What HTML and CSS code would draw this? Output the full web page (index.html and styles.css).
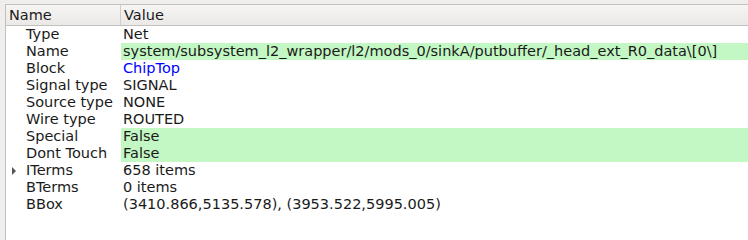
FILE: index.html
```html
<!DOCTYPE html>
<html>
<head>
<meta charset="utf-8">
<title>Properties</title>
<link rel="stylesheet" href="styles.css">
</head>
<body>
<div class="frame">
  <div class="head">
    <div class="hcell hname">Name</div>
    <div class="hcell">Value</div>
  </div>
  <div class="rows">
    <div class="row"><div class="key">Type</div><div class="val">Net</div></div>
    <div class="row"><div class="key">Name</div><div class="val hl">system/subsystem_l2_wrapper/l2/mods_0/sinkA/putbuffer/_head_ext_R0_data\[0\]</div></div>
    <div class="row"><div class="key">Block</div><div class="val link">ChipTop</div></div>
    <div class="row"><div class="key">Signal type</div><div class="val">SIGNAL</div></div>
    <div class="row"><div class="key">Source type</div><div class="val">NONE</div></div>
    <div class="row"><div class="key">Wire type</div><div class="val">ROUTED</div></div>
    <div class="row"><div class="key">Special</div><div class="val hl">False</div></div>
    <div class="row"><div class="key">Dont Touch</div><div class="val hl">False</div></div>
    <div class="row"><div class="key"><span class="arrow"></span>ITerms</div><div class="val">658 items</div></div>
    <div class="row"><div class="key">BTerms</div><div class="val">0 items</div></div>
    <div class="row"><div class="key">BBox</div><div class="val">(3410.866,5135.578), (3953.522,5995.005)</div></div>
  </div>
</div>
</body>
</html>
```

FILE: styles.css
```css
html, body {
	margin: 0;
	height: 100%;
	background: #efeeec;
	font-family: "DejaVu Sans", sans-serif;
	font-size: 14.5px;
	color: #1a1a1a;
}
.frame {
	margin: 4px 0 0 5px;
	height: calc(100% - 4px);
	border-left: 1px solid #c3c1be;
	border-top: 1px solid #c3c1be;
	background: #ffffff;
	box-sizing: border-box;
	overflow: hidden;
}
.head {
	display: flex;
	height: 20px;
	background: linear-gradient(#f6f5f4, #eae9e7);
	border-bottom: 1px solid #c3c1be;
}
.hcell {
	padding-left: 3px;
	line-height: 20px;
	flex: 1;
}
.hname {
	flex: 0 0 111px;
	border-right: 1px solid #d0cecb;
}
.row {
	display: flex;
	width: 100%;
	height: 17px;
	line-height: 17px;
}
.key {
	flex: 0 0 115px;
	box-sizing: border-box;
	padding-left: 20px;
	position: relative;
	white-space: nowrap;
}
.val {
	flex: 1 1 auto;
	min-width: 0;
	padding-left: 2px;
	white-space: nowrap;
}
.hl {
	background: #c3f7c3;
}
.link {
	color: #0000ff;
}
.arrow {
	position: absolute;
	left: 6px;
	top: 5px;
	border-left: 4px solid #555555;
	border-top: 4px solid transparent;
	border-bottom: 4px solid transparent;
}
```
